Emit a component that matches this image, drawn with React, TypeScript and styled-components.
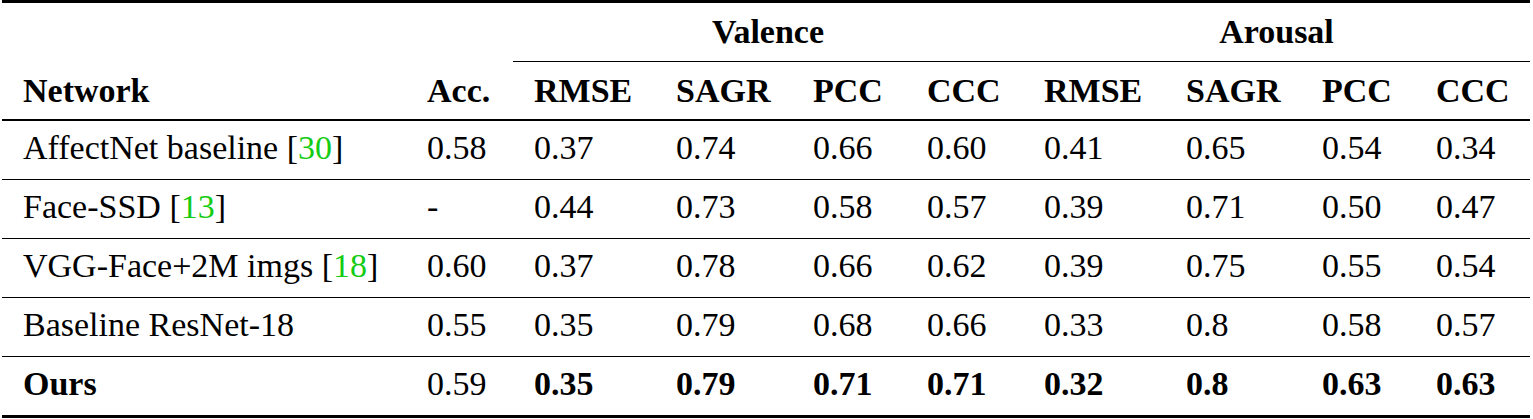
import React from "react";
import styled, { createGlobalStyle } from "styled-components";

const GlobalStyle = createGlobalStyle`
  html, body {
    margin: 0;
    padding: 0;
    background: #ffffff;
  }
  body {
    font-family: "Liberation Serif", "Times New Roman", serif;
  }
`;

const Page = styled.div`
  padding: 0 3px 0 2px;
  background: #ffffff;
`;

const Table = styled.table`
  border-collapse: separate;
  border-spacing: 0;
  table-layout: fixed;
  width: 1528px;
  border-top: 3px solid #000;
  border-bottom: 3px solid #000;
  font-family: "Liberation Serif", "Times New Roman", serif;
  font-size: 34px;
  color: #000;
`;

const BaseCell = styled.td`
  padding: 11px 21px 11px 21px;
  line-height: 36px;
  text-align: left;
  vertical-align: top;
  white-space: nowrap;
`;

const BlankCell = styled(BaseCell)``;

const GroupCell = styled(BaseCell)<{ $gap?: boolean }>`
  font-weight: bold;
  text-align: center;
  border-bottom: 1px solid #000;
`;

const HeadCell = styled(BaseCell)`
  font-weight: bold;
  padding-bottom: 10px;
  border-bottom: 2px solid #000;
`;

const Cell = styled(BaseCell)<{ $bold?: boolean; $last?: boolean }>`
  padding-top: 9px;
  padding-bottom: 13px;
  font-weight: ${(p) => (p.$bold ? "bold" : "normal")};
  border-bottom: ${(p) => (p.$last ? "none" : "1px solid #000")};
`;

const Cite = styled.span`
  color: #14cc14;
`;

const widths = [404, 107, 142, 137, 114, 117, 142, 136, 114, 115];
const metrics = ["RMSE", "SAGR", "PCC", "CCC"];

type Row = {
  name: React.ReactNode;
  acc: string;
  values: string[];
  bold?: boolean;
};

const rows: Row[] = [
  {
    name: (
      <>
        AffectNet baseline [<Cite>30</Cite>]
      </>
    ),
    acc: "0.58",
    values: ["0.37", "0.74", "0.66", "0.60", "0.41", "0.65", "0.54", "0.34"],
  },
  {
    name: (
      <>
        Face-SSD [<Cite>13</Cite>]
      </>
    ),
    acc: "-",
    values: ["0.44", "0.73", "0.58", "0.57", "0.39", "0.71", "0.50", "0.47"],
  },
  {
    name: (
      <>
        VGG-Face+2M imgs [<Cite>18</Cite>]
      </>
    ),
    acc: "0.60",
    values: ["0.37", "0.78", "0.66", "0.62", "0.39", "0.75", "0.55", "0.54"],
  },
  {
    name: "Baseline ResNet-18",
    acc: "0.55",
    values: ["0.35", "0.79", "0.68", "0.66", "0.33", "0.8", "0.58", "0.57"],
  },
  {
    name: "Ours",
    acc: "0.59",
    values: ["0.35", "0.79", "0.71", "0.71", "0.32", "0.8", "0.63", "0.63"],
    bold: true,
  },
];

export default function App() {
  return (
    <Page>
      <GlobalStyle />
      <Table>
        <colgroup>
          {widths.map((w, i) => (
            <col key={i} style={{ width: w }} />
          ))}
        </colgroup>
        <thead>
          <tr>
            <BlankCell />
            <BlankCell />
            <GroupCell colSpan={4}>Valence</GroupCell>
            <GroupCell colSpan={4}>Arousal</GroupCell>
          </tr>
          <tr>
            <HeadCell>Network</HeadCell>
            <HeadCell>Acc.</HeadCell>
            {[...metrics, ...metrics].map((m, i) => (
              <HeadCell key={i}>{m}</HeadCell>
            ))}
          </tr>
        </thead>
        <tbody>
          {rows.map((r, ri) => {
            const last = ri === rows.length - 1;
            return (
              <tr key={ri}>
                <Cell $bold={r.bold} $last={last}>
                  {r.name}
                </Cell>
                <Cell $last={last}>{r.acc}</Cell>
                {r.values.map((v, vi) => (
                  <Cell key={vi} $bold={r.bold} $last={last}>
                    {v}
                  </Cell>
                ))}
              </tr>
            );
          })}
        </tbody>
      </Table>
    </Page>
  );
}
